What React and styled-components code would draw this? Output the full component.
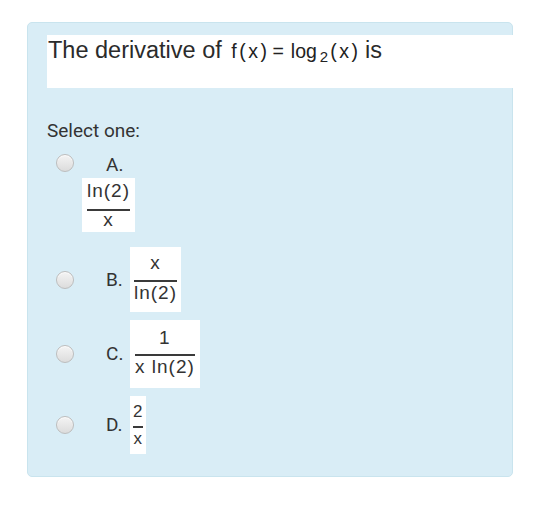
import React from 'react'
import styled, { createGlobalStyle } from 'styled-components'

const Global = createGlobalStyle`
  html, body {
    margin: 0;
    padding: 0;
    background: #fff;
  }
  body {
    font-family: Roboto, "Liberation Sans", sans-serif;
    color: #333;
  }
`

const options = [
  { key: 'A', num: 'ln(2)', den: 'x', pad: [2, 5, 3], gap: 7, denLine: 18, stacked: true },
  { key: 'B', num: 'x', den: 'ln(2)', pad: [5, 4, 8], gap: 6, denLine: 22 },
  { key: 'C', num: '1', den: 'x ln(2)', pad: [7, 5, 10], gap: 5, denLine: 22 },
  { key: 'D', num: '2', den: 'x', pad: [5, 3, 4], gap: 3, denLine: 22, small: true },
]

const App = () => {
  return (
    <Page>
      <Global />
      <Panel>
        <Question>
          The derivative of{' '}
          <Math>
            <Tight>f(x)</Tight>
            <Eq>=</Eq>
            log<Sub>2</Sub>
            <Tight>(x)</Tight>
          </Math>{' '}
          is
        </Question>
        <Prompt>Select one:</Prompt>
        <List>
          {options.map(o => (
            <Row key={o.key} stacked={o.stacked}>
              <Radio />
              <Body stacked={o.stacked}>
                <Letter>{o.key}.</Letter>
                <Fraction pad={o.pad}>
                  <Num small={o.small}>{o.num}</Num>
                  <Bar gap={o.gap} />
                  <Den line={o.denLine} small={o.small}>{o.den}</Den>
                </Fraction>
              </Body>
            </Row>
          ))}
        </List>
      </Panel>
    </Page>
  )
}

export default App

const Page = styled.div`
  padding: 22px 0 0 27px;
  width: 540px;
  height: 522px;
  box-sizing: border-box;
`

const Panel = styled.div`
  width: 486px;
  height: 455px;
  box-sizing: border-box;
  padding: 12px 0 0 19px;
  background: #d9edf6;
  border: 1px solid #c9e4ee;
  border-radius: 5px;
`

const Question = styled.div`
  width: 520px;
  height: 53px;
  box-sizing: border-box;
  padding: 1px 0 0 1px;
  background: #fff;
  font-family: "Liberation Sans", Arial, sans-serif;
  font-size: 23.5px;
  line-height: 28px;
  color: #2b2b2b;
`

const Math = styled.span`
  display: inline-block;
  margin: 0 -2px 0 3px;
  font-family: "Liberation Sans", Arial, sans-serif;
  font-size: 19.5px;
  color: #222;
`

const Tight = styled.span`
  letter-spacing: 2.5px;
`

const Eq = styled.span`
  margin: 0 7px 0 3px;
`

const Sub = styled.sub`
  font-size: 15px;
  vertical-align: -4px;
  margin: 0 2px 0 3px;
`

const Prompt = styled.div`
  margin-top: 32px;
  font-size: 19px;
  line-height: 22px;
  color: #333;
`

const List = styled.div`
  display: flex;
  flex-direction: column;
  gap: 8px;
  margin-top: 12px;
`

const Row = styled.div`
  display: flex;
  align-items: ${p => (p.stacked ? 'flex-start' : 'center')};
  margin-bottom: ${p => (p.stacked ? '7px' : '0')};
`

const Radio = styled.span`
  width: 18px;
  height: 18px;
  flex: none;
  box-sizing: border-box;
  margin: 0 8px 0 9px;
  border-radius: 50%;
  border: 1px solid #bdbdbd;
  background: linear-gradient(#f4f4f4, #dcdcdc);
  box-shadow: inset 0 1px 1px rgba(255, 255, 255, 0.8);
`

const Body = styled.div`
  display: flex;
  flex-direction: ${p => (p.stacked ? 'column' : 'row')};
  align-items: ${p => (p.stacked ? 'flex-start' : 'center')};
  gap: ${p => (p.stacked ? '2px' : '0')};
`

const Letter = styled.span`
  display: inline-block;
  width: 24px;
  margin-left: 24px;
  font-size: 19px;
  line-height: 22px;
  color: #333;
`

const Fraction = styled.span`
  display: inline-flex;
  flex-direction: column;
  align-items: stretch;
  padding: ${p => `${p.pad[0]}px ${p.pad[1]}px ${p.pad[2]}px`};
  background: #fff;
  font-family: "Liberation Sans", Arial, sans-serif;
  color: #333;
  text-align: center;
  white-space: nowrap;
`

const Num = styled.span`
  font-size: ${p => (p.small ? '17px' : '19px')};
  line-height: 22px;
  letter-spacing: 1px;
`

const Bar = styled.span`
  height: 2px;
  margin-top: ${p => p.gap}px;
  background: #3a3a3a;
`

const Den = styled.span`
  font-size: ${p => (p.small ? '17px' : '19px')};
  line-height: ${p => p.line}px;
  letter-spacing: 1px;
`
